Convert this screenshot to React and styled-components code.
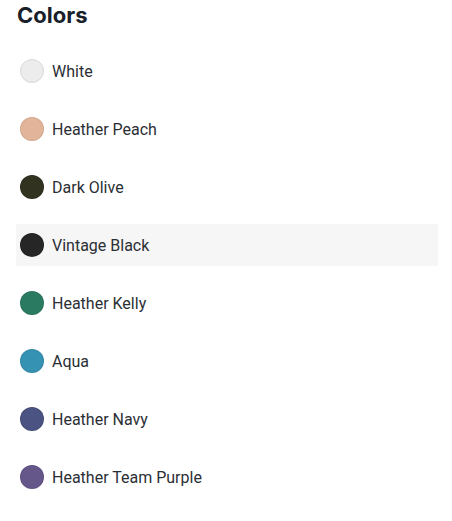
import React from 'react';
import styled, { createGlobalStyle } from 'styled-components';

const GlobalStyle = createGlobalStyle`
  body {
    margin: 0;
    background: #fff;
    font-family: Roboto, "Liberation Sans", sans-serif;
  }
`;

const colors = [
  { name: 'White', hex: '#ececec', border: '#d8d8d8' },
  { name: 'Heather Peach', hex: '#e2b59a' },
  { name: 'Dark Olive', hex: '#31321f' },
  { name: 'Vintage Black', hex: '#262626', active: true },
  { name: 'Heather Kelly', hex: '#2a7a62' },
  { name: 'Aqua', hex: '#3592b3' },
  { name: 'Heather Navy', hex: '#4a5381' },
  { name: 'Heather Team Purple', hex: '#66578b' },
];

const Panel = styled.section`
  padding: 0 14px 0 16px;
`;

const Title = styled.h2`
  margin: 0;
  padding-top: 2px;
  font-family: Inter, "Liberation Sans", sans-serif;
  font-size: 22px;
  line-height: 27px;
  font-weight: 700;
  color: #18202a;
  padding-left: 1px;
`;

const List = styled.ul`
  list-style: none;
  margin: 21px 0 0;
  padding: 0;
  display: flex;
  flex-direction: column;
  gap: 16px;
`;

const Row = styled.li`
  display: flex;
  align-items: center;
  gap: 8px;
  height: 42px;
  padding: 0 4px;
  background: ${p => (p.$active ? '#f6f6f6' : 'transparent')};
  cursor: pointer;
`;

const Swatch = styled.span`
  width: 24px;
  height: 24px;
  border-radius: 50%;
  box-sizing: border-box;
  background: ${p => p.$hex};
  border: 1px solid ${p => p.$border || 'rgba(0,0,0,0.08)'};
  flex-shrink: 0;
`;

const Label = styled.span`
  font-size: 16px;
  color: #2b2f35;
`;

export default function App() {
  return (
    <>
      <GlobalStyle />
      <Panel>
        <Title>Colors</Title>
        <List>
          {colors.map(c => (
            <Row key={c.name} $active={c.active}>
              <Swatch $hex={c.hex} $border={c.border} />
              <Label>{c.name}</Label>
            </Row>
          ))}
        </List>
      </Panel>
    </>
  );
}
